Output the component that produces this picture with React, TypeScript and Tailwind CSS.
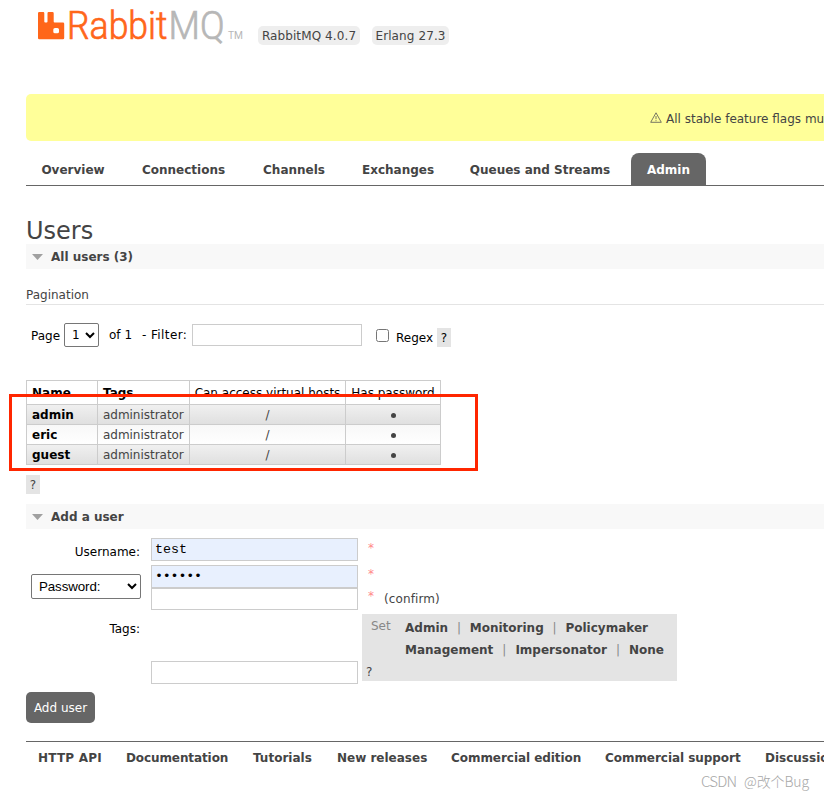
import React from "react";

const tabs = [
  { label: "Overview", className: "w-[94px]" },
  { label: "Connections", className: "w-[116px]" },
  { label: "Channels", className: "w-[94px]" },
  { label: "Exchanges", className: "w-[103px]" },
  { label: "Queues and Streams", className: "w-[170px]" },
];

const users = [
  { name: "admin", tags: "administrator", vhosts: "/" },
  { name: "eric", tags: "administrator", vhosts: "/" },
  { name: "guest", tags: "administrator", vhosts: "/" },
];

const footerLinks = [
  { label: "HTTP API", className: "w-[88px] tracking-[0.2px]" },
  { label: "Documentation", className: "w-[127px] tracking-[-0.1px]" },
  { label: "Tutorials", className: "w-[84px]" },
  { label: "New releases", className: "w-[114px]" },
  { label: "Commercial edition", className: "w-[154px] tracking-[-0.05px]" },
  { label: "Commercial support", className: "w-[160px] tracking-[-0.05px]" },
  { label: "Discussions", className: "w-[100px]" },
];

const Logo = () => (
  <svg width="206" height="48" viewBox="0 0 206 48" className="block shrink-0">
    <path
      d="M1.200 12h4q1.100 0 1.100 1.200v8.400q0 .9.9.9h1.400q.9 0 .9-.9v-8.400q0-1.200 1.100-1.200h3.900q1.200 0 1.200 1.200v8.400q0 .9.9.9h8.400q1.200 0 1.200 1.200V38q0 1.200-1.200 1.200H1.200Q0 39.200 0 38V13.200Q0 12 1.200 12zM17 28q-1.700 0-1.700 1.600v2.100q0 1.600 1.700 1.600h2.300q1.700 0 1.700-1.600v-2.100q0-1.600-1.700-1.600z"
      fill="#ff661a"
      fillRule="evenodd"
    />
    <text x="29" y="39.400" textLength="100.500" lengthAdjust="spacingAndGlyphs" fill="#ff661a" stroke="#ff661a" strokeWidth="0.700" className="font-['Roboto'] text-[38px] leading-none font-light">
      Rabbit
    </text>
    <text x="130.500" y="39.400" textLength="56" lengthAdjust="spacingAndGlyphs" fill="#b7b7b7" stroke="#b7b7b7" strokeWidth="0.700" className="font-['Roboto'] text-[38px] leading-none font-light">
      MQ
    </text>
    <text x="190" y="39" textLength="15" lengthAdjust="spacingAndGlyphs" fill="#b7b7b7" className="font-['Roboto'] text-[10px] leading-none">
      TM
    </text>
  </svg>
);

const Chevron = ({ className }: { className: string }) => (
  <svg width="10" height="7" viewBox="0 0 10 7" className={`pointer-events-none absolute ${className}`}>
    <path d="M1 1l4 4 4-4" fill="none" stroke="#000" strokeWidth="2" />
  </svg>
);

const SectionHeader = ({ title }: { title: string }) => (
  <h2 className="flex h-[25px] items-center bg-[#f8f8f8] pl-[6px] text-[12px] font-bold">
    <svg width="11" height="6" viewBox="0 0 11 6" className="mr-2">
      <path d="M0 0h11L5.500 6z" fill="#a0a0a0" />
    </svg>
    {title}
  </h2>
);

const Required = () => <span className="h-[14px] w-[8px] text-[12px] leading-[14px] text-[#f88]">*</span>;

const Bar = () => <span className="font-normal text-[#888]">|</span>;

export default function App() {
  return (
    <div className="relative h-[797px] w-[824px] overflow-hidden bg-white pl-[26px] font-['DejaVu_Sans',Verdana,sans-serif] text-[12px] leading-[16px] whitespace-nowrap text-[#444]">
      <header className="flex h-[94px] items-start pl-[12px]">
        <Logo />
        <div className="mt-[26px] ml-[14px] flex gap-3">
          <span className="h-[19px] w-[102px] rounded-[5px] bg-[#eee] text-center leading-[20px] tracking-[0.1px]">RabbitMQ 4.0.7</span>
          <span className="h-[19px] w-[77px] rounded-[5px] bg-[#eee] text-center leading-[20px] tracking-[0.1px]">Erlang 27.3</span>
        </div>
      </header>

      <div className="flex h-[47px] items-center rounded-l-[5px] bg-[#ff9] pt-[2px] pl-[624px]">
        <svg width="12" height="11" viewBox="0 0 12 11" className="mr-1 mb-[2px] shrink-0" fill="none" stroke="#555" strokeWidth="0.800">
          <path d="M6 .8L11.300 10.300H.7zM6 4v3.200M6 8.200v1" />
        </svg>
        All stable feature flags must be enabled after completing an upgrade.
      </div>

      <nav className="mt-3 flex h-[33px] border-b border-[#666] text-[12px] leading-[34px] font-bold">
        <div className="flex w-[605px] justify-between pr-[6px]">
          {tabs.map((tab) => (
            <a key={tab.label} className={`text-center ${tab.className}`}>
              {tab.label}
            </a>
          ))}
        </div>
        <a className="w-[75px] rounded-t-[8px] bg-[#666] text-center text-white">Admin</a>
      </nav>

      <h1 className="mt-[30px] h-[28px] text-[24px] leading-[30px]">Users</h1>
      <SectionHeader title="All users (3)" />

      <h3 className="mt-[17px] h-[19px] border-b border-[#e4e4e4] leading-[18px]">Pagination</h3>

      <div className="mt-[18px] flex h-[24px] items-start pl-[5px] text-black">
        <span className="mt-[5px] w-[33px]">Page</span>
        <div className="relative h-[24px] w-[35px]">
          <select className="block h-[24px] w-[35px] appearance-none rounded-[2px] border border-[#767676] bg-white pl-[7px] text-[12px]">
            <option>1</option>
          </select>
          <Chevron className="top-[9px] left-[21px]" />
        </div>
        <span className="mt-[4px] ml-[10px] w-[33px]">of 1</span>
        <span className="mt-[4px] w-[50px] tracking-[0.4px]">- Filter:</span>
        <input className="mt-[1px] h-[22px] w-[170px] border border-[#ccc]" />
        <input type="checkbox" className="mt-[6px] ml-[14px] h-[13px] w-[13px]" />
        <span className="mt-[7px] ml-[7px] w-[41px]">Regex</span>
        <span className="mt-[5px] h-[19px] w-[14px] bg-[#e4e4e4] text-center leading-[20px]">?</span>
      </div>

      <table className="mt-[33px] w-[415px] table-fixed border-collapse">
        <thead>
          <tr className="h-[24px] text-black">
            <th className="w-[71px] border border-[#ccc] p-0 pl-[5px] text-left font-bold">Name</th>
            <th className="w-[92px] border border-[#ccc] p-0 pl-[5px] text-left font-bold">Tags</th>
            <th className="w-[156px] border border-[#ccc] p-0 font-normal">Can access virtual hosts</th>
            <th className="w-[95px] border border-[#ccc] p-0 font-normal">Has password</th>
          </tr>
        </thead>
        <tbody>
          {users.map((user) => (
            <tr key={user.name} className="h-[20px] odd:bg-linear-to-b odd:from-[#f0f0f0] odd:to-[#dfdfdf] even:bg-linear-to-b even:from-[#f8f8f8] even:to-white">
              <td className="border border-[#ccc] p-0 pl-[5px] font-bold text-black">{user.name}</td>
              <td className="border border-[#ccc] p-0 pl-[5px] tracking-[-0.03px]">{user.tags}</td>
              <td className="border border-[#ccc] p-0 text-center">{user.vhosts}</td>
              <td className="border border-[#ccc] p-0 text-center">
                <span className="mx-auto mt-[2px] block h-[5px] w-[5px] rounded-full bg-[#444]" />
              </td>
            </tr>
          ))}
        </tbody>
      </table>

      <div className="mt-[10px] mb-[10px] h-[19px] w-[14px] bg-[#e4e4e4] text-center leading-[20px]">?</div>

      <SectionHeader title="Add a user" />

      <form className="h-[163px] pt-[9px]">
        <div className="flex h-[27px]">
          <label className="mt-[6px] w-[114px] text-right text-black">Username:</label>
          <input
            defaultValue="test"
            className="ml-[11px] h-[23px] w-[207px] border border-[#ccc] bg-[#e8f0fe] px-[3px] font-['Liberation_Mono',monospace] text-[13.33px] text-black"
          />
          <div className="mt-[2px] ml-[10px]">
            <Required />
          </div>
        </div>
        <div className="flex h-[49px]">
          <div className="relative mt-[9px] ml-[5px] h-[25px] w-[110px]">
            <select className="block h-[25px] w-[110px] appearance-none rounded-[2px] border border-[#767676] bg-white pl-[7px] font-['Liberation_Sans',Arial,sans-serif] text-[13.33px] tracking-[-0.1px] text-black">
              <option>Password:</option>
            </select>
            <Chevron className="top-[9px] right-[4px]" />
          </div>
          <div className="ml-[10px] w-[207px]">
            <input
              defaultValue="••••••"
              className="block h-[23px] w-[207px] border border-[#ccc] bg-[#e8f0fe] px-[3px] pb-[1px] font-['Liberation_Mono',monospace] text-[13.33px] tracking-[-0.2px] text-black"
            />
            <input className="block h-[22px] w-[207px] border border-[#ccc]" />
          </div>
          <div className="mt-[2px] ml-[10px] flex flex-col gap-[8px]">
            <Required />
            <div className="flex">
              <Required />
              <span className="mt-[2px] ml-[8px] tracking-[0.1px]">(confirm)</span>
            </div>
          </div>
        </div>
        <div className="flex h-[70px]">
          <label className="mt-[7px] w-[114px] text-right text-black">Tags:</label>
          <input className="mt-[47px] ml-[11px] h-[23px] w-[207px] border border-[#ccc]" />
          <div className="ml-[4px] h-[67px] w-[315px] bg-[#e4e4e4]">
            <div className="flex h-[50px]">
              <span className="mt-[4px] ml-[9px] w-[34px] text-[#888]">Set</span>
              <div className="mt-[3px] font-bold leading-[22px]">
                <div className="flex w-[243px] justify-between">
                  <span>Admin</span>
                  <Bar />
                  <span>Monitoring</span>
                  <Bar />
                  <span>Policymaker</span>
                </div>
                <div className="flex w-[259px] justify-between">
                  <span>Management</span>
                  <Bar />
                  <span>Impersonator</span>
                  <Bar />
                  <span>None</span>
                </div>
              </div>
            </div>
            <span className="ml-[4px]">?</span>
          </div>
        </div>
      </form>

      <button className="block h-[31px] w-[69px] rounded-[5px] bg-[#666] text-white">Add user</button>

      <footer className="mt-[18px] flex border-t border-[#666] pt-[8px] pl-[12px] font-bold">
        {footerLinks.map((link) => (
          <a key={link.label} className={`shrink-0 ${link.className}`}>
            {link.label}
          </a>
        ))}
      </footer>

      {/* Highlight around the user rows */}
      <div className="pointer-events-none absolute top-[394px] left-[9px] h-[77px] w-[469px] border-3 border-[#ff2600]" />

      <div className="absolute top-[770px] left-[701px] flex font-['Noto_Sans_CJK_SC',sans-serif] text-[15px] leading-[22px] font-light text-[#a8a8a8]">
        <span className="w-[43px] tracking-[-0.8px]">CSDN</span>
        <span className="text-[14px] tracking-[-0.1px]">@改个Bug</span>
      </div>
    </div>
  );
}
